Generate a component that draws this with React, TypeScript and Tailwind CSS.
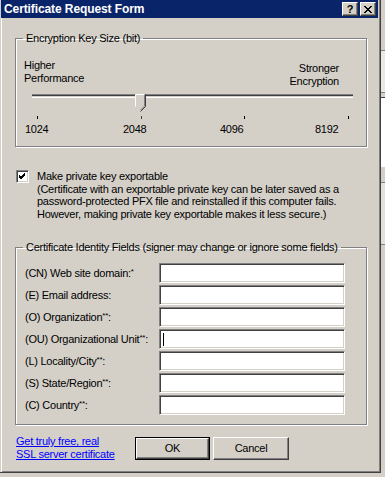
import React, { FC } from "react";

const raised =
  "border border-t-white border-l-white border-r-[#404040] border-b-[#404040] shadow-[inset_-1px_-1px_0_#808080]";
const sunken =
  "border border-t-[#808080] border-l-[#808080] border-r-white border-b-white shadow-[inset_1px_1px_0_#404040,inset_-1px_-1px_0_#d4d0c8]";
const groupBox =
  "ml-[15px] w-[352px] border border-[#808080] shadow-[1px_1px_0_#fff,inset_1px_1px_0_#fff] m-0 p-0";

const fields = [
  { label: "(CN) Web site domain:", mark: "*", colon: false, caret: false },
  { label: "(E) Email address:", mark: "", colon: false, caret: false },
  { label: "(O) Organization", mark: "**", colon: true, caret: false },
  { label: "(OU) Organizational Unit", mark: "**", colon: true, caret: true },
  { label: "(L) Locality/City", mark: "**", colon: true, caret: false },
  { label: "(S) State/Region", mark: "**", colon: true, caret: false },
  { label: "(C) Country", mark: "**", colon: true, caret: false },
];

const SliderThumb: FC = () => (
  <svg width="11" height="18" viewBox="0 0 11 18" className="absolute left-[103px] top-0">
    <path d="M0.5 0.5 H10.5 V12.5 L5.5 17.5 L0.5 12.5 Z" fill="#d4d0c8" />
    <path d="M0.5 12.5 V0.5 H9.5" fill="none" stroke="#fff" />
    <path d="M10.5 0 V12.5 L5.5 17.5" fill="none" stroke="#404040" />
    <path d="M9.5 1 V12 L5.5 16" fill="none" stroke="#808080" />
  </svg>
);

const App: FC = () => {
  return (
    <div className="flex w-[385px] h-[477px] bg-[#d4d0c8] font-['Liberation_Sans',Arial,sans-serif] text-[11px] tracking-[-0.25px] text-black overflow-hidden">
      <div className="flex flex-col w-[381px] h-[473px] border-r border-b border-[#404040] shadow-[inset_1px_0_0_#d4d0c8,inset_2px_0_0_#fff,inset_-1px_-1px_0_#808080]">
        {/* title bar */}
        <div className="ml-[1px] mr-[2px] h-[18px] bg-[#0a246a] flex items-center pl-[3px] pr-[2px]">
          <span className="text-white font-bold text-[12px] tracking-[-0.1px] leading-none flex-1">
            Certificate Request Form
          </span>
          <div className={`w-[16px] h-[14px] bg-[#d4d0c8] ${raised} flex items-center justify-center text-[11px] font-bold leading-none`}>
            ?
          </div>
          <div className={`ml-[2px] w-[16px] h-[14px] bg-[#d4d0c8] ${raised} flex items-center justify-center`}>
            <svg width="8" height="7" viewBox="0 0 8 7">
              <path d="M0 0 L7 7 M1 0 L8 7 M7 0 L0 7 M8 0 L1 7" stroke="#000" strokeWidth="1" />
            </svg>
          </div>
        </div>

        {/* key size */}
        <fieldset className={`${groupBox} mt-[14px]`}>
          <legend className="ml-[7px] px-[3px] leading-[13px]">Encryption Key Size (bit)</legend>
          <div className="flex justify-between items-start pl-[8px] pr-[27px] mt-[14px] leading-[12.5px]">
            <div>
              <div>Higher</div>
              <div>Performance</div>
            </div>
            <div className="text-right mt-[3px]">
              <div>Stronger</div>
              <div>Encryption</div>
            </div>
          </div>
          <div className="relative ml-[16px] w-[321px] h-[18px] mt-[1px]">
            <div className="mt-[7px] h-[4px] border-t border-t-[#808080] border-b border-b-white bg-[#404040] shadow-[inset_0_-1px_0_#d4d0c8]" />
            <SliderThumb />
          </div>
          <div className="ml-[21px] w-[312px] mt-[4px] h-[3px] flex justify-between">
            <span className="w-px h-[3px] bg-black" />
            <span className="w-px h-[3px] bg-[#404040]" />
            <span className="w-px h-[3px] bg-black" />
            <span className="w-px h-[3px] bg-black" />
          </div>
          <div className="flex pl-[9px] mt-[4px] mb-[10px] leading-[13px]">
            <span className="w-[98px]">1024</span>
            <span className="w-[97px]">2048</span>
            <span className="w-[95px]">4096</span>
            <span>8192</span>
          </div>
        </fieldset>

        {/* exportable */}
        <div className="flex items-start mt-[23px] ml-[16px]">
          <div className={`w-[13px] h-[13px] bg-white ${sunken} flex items-center justify-center`}>
            <svg width="7" height="7" viewBox="0 0 7 7">
              <path d="M0 2 L2 4 L6 0 M0 3 L2 5 L6 1 M0 4 L2 6 L6 2" stroke="#000" strokeWidth="1" fill="none" />
            </svg>
          </div>
          <div className="ml-[8px] leading-[12.5px] whitespace-nowrap">
            <div>Make private key exportable</div>
            <div>(Certificate with an exportable private key can be later saved as a</div>
            <div>password-protected PFX file and reinstalled if this computer fails.</div>
            <div>However, making private key exportable makes it less secure.)</div>
          </div>
        </div>

        {/* identity fields */}
        <fieldset className={`${groupBox} mt-[21px]`}>
          <legend className="ml-[7px] px-[3px] leading-[13px]">
            Certificate Identity Fields (signer may change or ignore some fields)
          </legend>
          <div className="flex flex-col gap-[2px] mt-[9px] mb-[9px]">
            {fields.map((f) => (
              <div key={f.label} className="flex items-center h-[20px] pl-[9px] leading-[13px]">
                <span className="w-[134px] whitespace-nowrap">
                  {f.label}
                  {f.mark && (
                    <span className="relative -top-[3px] text-[8px] leading-none">{f.mark}</span>
                  )}
                  {f.colon && ":"}
                </span>
                <div className={`w-[186px] h-[20px] bg-white ${sunken} flex items-center pl-[3px]`}>
                  {f.caret && <span className="w-px h-[13px] bg-black" />}
                </div>
              </div>
            ))}
          </div>
        </fieldset>

        {/* bottom */}
        <div className="flex items-start mt-[10px] ml-[16px]">
          <div className="w-[119px] leading-[13px] text-[#0000ff] underline whitespace-nowrap">
            <div>Get truly free, real</div>
            <div>SSL server certificate</div>
          </div>
          <div className="mt-[2px] w-[75px] h-[23px] border border-black">
            <div className={`w-full h-full ${raised} flex items-center justify-center`}>OK</div>
          </div>
          <div className={`ml-[3px] mt-[2px] w-[76px] h-[23px] ${raised} flex items-center justify-center`}>
            Cancel
          </div>
        </div>
      </div>

      {/* neighbouring window edge */}
      <div className="flex flex-col w-[4px] h-full">
        <div className="h-[50px]" />
        <div className="h-[43px] bg-[#ece9e4] border-y border-[#808080]" />
        <div className="h-[4px]" />
        <div className="h-[70px] bg-white border-t border-[#404040]" />
        <div className="h-[15px]" />
        <div className="h-[63px] bg-[#e4e1dc] border-y border-[#808080]" />
      </div>
    </div>
  );
};

export default App;
